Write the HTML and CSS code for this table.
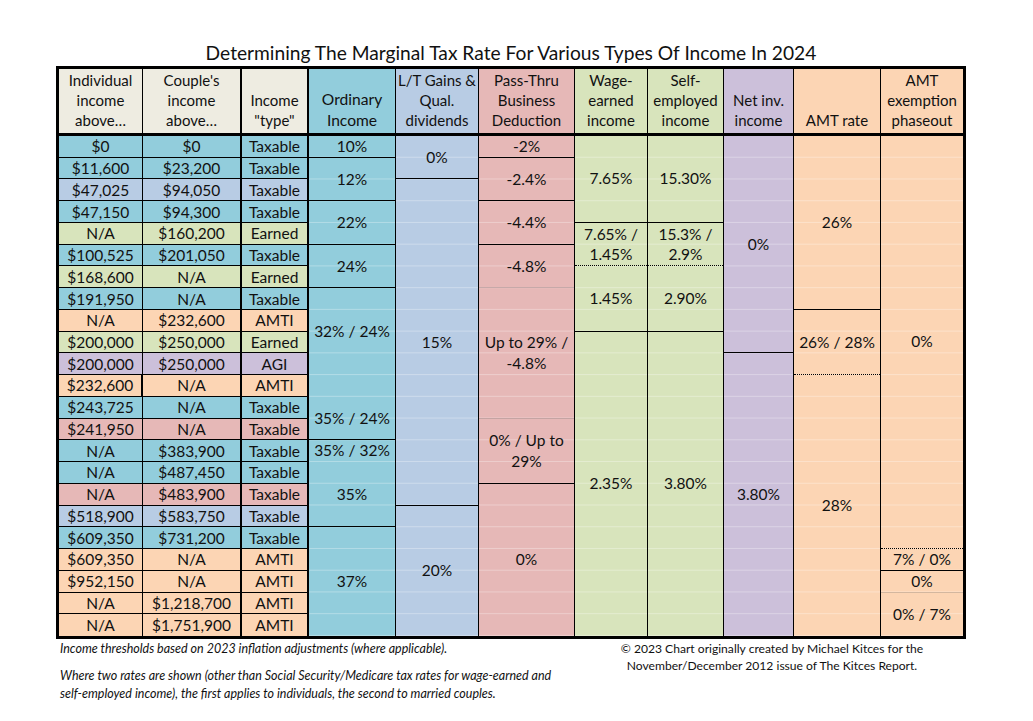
FILE: index.html
```html
<!DOCTYPE html>
<html lang="en">
<head>
<meta charset="utf-8">
<title>Marginal Tax Rate 2024</title>
<link rel="stylesheet" href="styles.css">
</head>
<body>
<div class="page">
  <h1 class="title">Determining The Marginal Tax Rate For Various Types Of Income In 2024</h1>
  <div class="table">
    <div class="hd bg">Individual<br>income<br>above…</div>
    <div class="hd bg thick">Couple's<br>income<br>above…</div>
    <div class="hd bg thick">Income<br>"type"</div>
    <div class="hd aq big">Ordinary<br>Income</div>
    <div class="hd lb">L/T Gains &amp;<br>Qual.<br>dividends</div>
    <div class="hd pk">Pass-Thru<br>Business<br>Deduction</div>
    <div class="hd gr">Wage-<br>earned<br>income</div>
    <div class="hd gr">Self-<br>employed<br>income</div>
    <div class="hd pu">Net inv.<br>income</div>
    <div class="hd or">AMT rate</div>
    <div class="hd or last">AMT<br>exemption<br>phaseout</div>

    <div class="left">
      <div class="row aq"><span>$0</span><span>$0</span><span>Taxable</span></div>
      <div class="row aq"><span>$11,600</span><span>$23,200</span><span>Taxable</span></div>
      <div class="row lb"><span>$47,025</span><span>$94,050</span><span>Taxable</span></div>
      <div class="row aq"><span>$47,150</span><span>$94,300</span><span>Taxable</span></div>
      <div class="row gr"><span>N/A</span><span>$160,200</span><span>Earned</span></div>
      <div class="row aq"><span>$100,525</span><span>$201,050</span><span>Taxable</span></div>
      <div class="row gr"><span>$168,600</span><span>N/A</span><span>Earned</span></div>
      <div class="row aq"><span>$191,950</span><span>N/A</span><span>Taxable</span></div>
      <div class="row or"><span>N/A</span><span>$232,600</span><span>AMTI</span></div>
      <div class="row gr"><span>$200,000</span><span>$250,000</span><span>Earned</span></div>
      <div class="row pu"><span>$200,000</span><span>$250,000</span><span>AGI</span></div>
      <div class="row or split"><span>$232,600</span><span>N/A</span><span>AMTI</span></div>
      <div class="row aq"><span>$243,725</span><span>N/A</span><span>Taxable</span></div>
      <div class="row pk"><span>$241,950</span><span>N/A</span><span>Taxable</span></div>
      <div class="row aq"><span>N/A</span><span>$383,900</span><span>Taxable</span></div>
      <div class="row aq"><span>N/A</span><span>$487,450</span><span>Taxable</span></div>
      <div class="row pk"><span>N/A</span><span>$483,900</span><span>Taxable</span></div>
      <div class="row lb"><span>$518,900</span><span>$583,750</span><span>Taxable</span></div>
      <div class="row aq"><span>$609,350</span><span>$731,200</span><span>Taxable</span></div>
      <div class="row or"><span>$609,350</span><span>N/A</span><span>AMTI</span></div>
      <div class="row or"><span>$952,150</span><span>N/A</span><span>AMTI</span></div>
      <div class="row or"><span>N/A</span><span>$1,218,700</span><span>AMTI</span></div>
      <div class="row or"><span>N/A</span><span>$1,751,900</span><span>AMTI</span></div>
    </div>

    <div class="col aq">
      <div class="cell s1">10%</div>
      <div class="cell s2">12%</div>
      <div class="cell s2">22%</div>
      <div class="cell s2">24%</div>
      <div class="cell s4 faint">32% / 24%</div>
      <div class="cell s1 faint"></div>
      <div class="cell s2">35% / 24%</div>
      <div class="cell s1 faint">35% / 32%</div>
      <div class="cell s3">35%</div>
      <div class="cell s5">37%</div>
    </div>

    <div class="col lb">
      <div class="cell s2">0%</div>
      <div class="cell s15">15%</div>
      <div class="cell s6">20%</div>
    </div>

    <div class="col pk">
      <div class="cell s1">-2%</div>
      <div class="cell s2">-2.4%</div>
      <div class="cell s2">-4.4%</div>
      <div class="cell s2 grey">-4.8%</div>
      <div class="cell s6 grey">Up to 29% /<br>-4.8%</div>
      <div class="cell s3">0% / Up to<br>29%</div>
      <div class="cell s7">0%</div>
    </div>

    <div class="col gr">
      <div class="cell s4">7.65%</div>
      <div class="cell s2 dotted tight">7.65% /<br>1.45%</div>
      <div class="cell s3">1.45%</div>
      <div class="cell s14">2.35%</div>
    </div>

    <div class="col gr">
      <div class="cell s4">15.30%</div>
      <div class="cell s2 dotted tight">15.3% /<br>2.9%</div>
      <div class="cell s3">2.90%</div>
      <div class="cell s14">3.80%</div>
    </div>

    <div class="col pu">
      <div class="cell s10">0%</div>
      <div class="cell s13">3.80%</div>
    </div>

    <div class="col or">
      <div class="cell s8">26%</div>
      <div class="cell s3 dotted">26% / 28%</div>
      <div class="cell s12">28%</div>
    </div>

    <div class="col or last">
      <div class="cell s19 dotted">0%</div>
      <div class="cell s1">7% / 0%</div>
      <div class="cell s1 grey">0%</div>
      <div class="cell s2">0% / 7%</div>
    </div>
  </div>

  <div class="footer">
    <div class="notes">
      <p class="note">Income thresholds based on 2023 inflation adjustments (where applicable).</p>
      <p class="note">Where two rates are shown (other than Social Security/Medicare tax rates for wage-earned and<br>self-employed income), the first applies to individuals, the second to married couples.</p>
    </div>
    <div class="credit">© 2023 Chart originally created by Michael Kitces for the<br>November/December 2012 issue of The Kitces Report.</div>
  </div>
</div>
</body>
</html>
```
FILE: styles.css
```css
* { box-sizing: border-box; }

html, body {
  margin: 0;
  padding: 0;
  background: #fff;
}

body {
  font-family: Lato, "Open Sans", "Liberation Sans", sans-serif;
  color: #111;
}

.page {
  padding: 40px 0 0 56px;
  width: 1033px;
}

.title {
  width: 910px;
  margin: 0;
  height: 26px;
  line-height: 26px;
  font-size: 19.2px;
  font-weight: 400;
  text-align: center;
  color: #111;
}

/* ---------- table ---------- */
.table {
  width: 910px;
  border: 3px solid #000;
  display: grid;
  grid-template-columns: 84px 99px 67px 87px 83px 96px 73px 76px 70px 87px 82px;
  grid-template-rows: 67px 500px;
  font-size: 15.5px;
}

.hd {
  display: flex;
  flex-direction: column;
  justify-content: flex-end;
  align-items: center;
  text-align: center;
  font-size: 15px;
  line-height: 20px;
  padding-bottom: 3px;
  border-right: 1px solid #000;
  border-bottom: 3px solid #000;
  white-space: nowrap;
}

.hd.big { font-size: 15.6px; line-height: 20.5px; }
.hd.thick { border-right-width: 2px; }
.hd.last, .col.last { border-right: none; }

/* colours */
.bg { background: #eeece1; }
.aq { background-color: #92cddc; }
.lb { background-color: #b8cce4; }
.pk { background-color: #e6b8b7; }
.gr { background-color: #d8e4bc; }
.pu { background-color: #ccc0da; }
.or { background-color: #fcd5b4; }

/* ---------- left three columns ---------- */
.left {
  grid-column: span 3;
  display: grid;
  grid-template-columns: 84px 99px 67px;
  grid-template-rows: repeat(23, 1fr);
}

.row { display: contents; }

.row > span {
  display: flex;
  align-items: center;
  justify-content: center;
  border-bottom: 1px solid #000;
  border-right: 1px solid #000;
  line-height: 20px;
  white-space: nowrap;
}

.row > span:nth-child(2),
.row > span:nth-child(3) { border-right-width: 2px; }
.row.split > span:first-child { border-right-width: 2px; }
.row:last-child > span { border-bottom: none; }

.row.aq > span { background: #92cddc; }
.row.lb > span { background: #b8cce4; }
.row.pk > span { background: #e6b8b7; }
.row.gr > span { background: #d8e4bc; }
.row.pu > span { background: #ccc0da; }
.row.or > span { background: #fcd5b4; }

/* ---------- merged-cell columns ---------- */
.col {
  display: grid;
  grid-template-rows: repeat(23, 1fr);
  border-right: 1px solid #000;
  background-image: linear-gradient(to bottom, transparent calc(100% - 1px), rgba(255, 255, 255, 0.3) calc(100% - 1px));
  background-size: 100% calc(100% / 23);
  background-repeat: repeat-y;
}

.cell {
  display: flex;
  align-items: center;
  justify-content: center;
  text-align: center;
  line-height: 21px;
  border-bottom: 1px solid #000;
  white-space: nowrap;
}

.cell:last-child { border-bottom: none; }
.cell.tight { line-height: 20px; }
.cell.faint { border-bottom-color: transparent; }
.cell.grey { border-bottom-color: rgba(0, 0, 0, 0.16); }
.cell.dotted { border-bottom: 1px dotted #000; }

.s1 { grid-row: span 1; }
.s2 { grid-row: span 2; }
.s3 { grid-row: span 3; }
.s4 { grid-row: span 4; }
.s5 { grid-row: span 5; }
.s6 { grid-row: span 6; }
.s7 { grid-row: span 7; }
.s8 { grid-row: span 8; }
.s10 { grid-row: span 10; }
.s12 { grid-row: span 12; }
.s13 { grid-row: span 13; }
.s14 { grid-row: span 14; }
.s15 { grid-row: span 15; }
.s19 { grid-row: span 19; }

/* ---------- footer ---------- */
.footer {
  width: 910px;
  display: flex;
  align-items: flex-start;
  padding-top: 1px;
}

.notes {
  flex: 0 0 551px;
  padding-left: 4px;
}

.note {
  margin: 0 0 9px;
  font-style: italic;
  font-size: 12.5px;
  line-height: 18px;
  white-space: nowrap;
}

.credit {
  flex: 0 0 330px;
  text-align: center;
  font-size: 12.1px;
  line-height: 17px;
  white-space: nowrap;
}
```
